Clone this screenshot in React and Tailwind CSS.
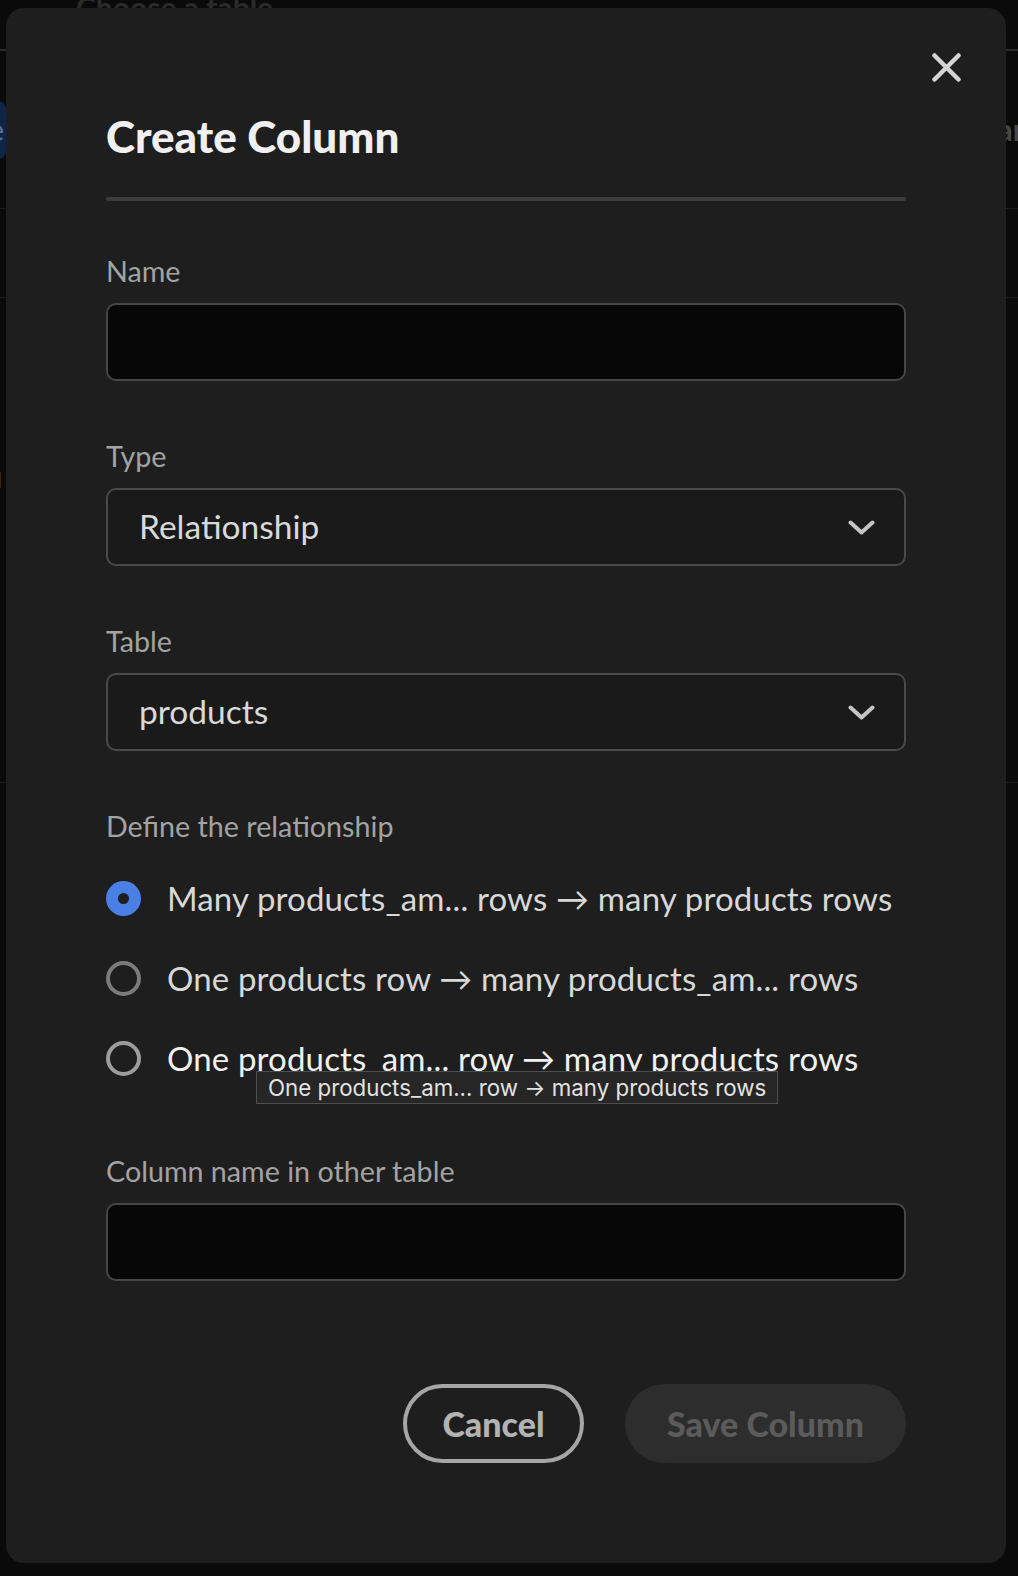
import { useState } from 'react';

const labelCls = 'text-[28.7px] leading-[34px] text-[#a3a3a3]';

const Chevron = () => (
  <svg width="27" height="15" viewBox="0 0 27 15" fill="none" className="shrink-0">
    <path d="M2.5 2.5 L13.5 12.5 L24.5 2.5" stroke="#c4c4c4" strokeWidth="4" strokeLinecap="round" strokeLinejoin="round" />
  </svg>
);

const Field = ({ label, className = '', children }) => (
  <div className={className}>
    <div className={labelCls}>{label}</div>
    <div className="mt-[15px]">{children}</div>
  </div>
);

const TextInput = () => (
  <input className="block h-[78px] w-full rounded-[10px] border-2 border-[#464646] bg-[#070707] px-[30px] text-[32px] text-[#dcdcdc] outline-none" />
);

const Select = ({ value }) => (
  <div className="flex h-[78px] w-full items-center justify-between rounded-[10px] border-2 border-[#4a4a4a] bg-[#1a1a1a] pl-[31px] pr-[29px]">
    <span className="text-[33.5px] leading-none text-[#d9d9d9]">{value}</span>
    <Chevron />
  </div>
);

const options = [
  'Many products_am... rows → many products rows',
  'One products row → many products_am... rows',
  'One products_am... row → many products rows',
];

const Radio = ({ label, checked, hover, onClick, children }) => (
  <div className="relative flex h-[80px] cursor-pointer items-center" onClick={onClick}>
    {checked ? (
      <span className="flex h-[35px] w-[35px] shrink-0 items-center justify-center rounded-full bg-[#4a80e6]">
        <span className="h-[11px] w-[11px] rounded-full bg-[#1e1e1e]" />
      </span>
    ) : (
      <span className={`h-[35px] w-[35px] shrink-0 rounded-full border-[4px] ${hover ? 'border-[#9c9c9c]' : 'border-[#7b7b7b]'}`} />
    )}
    <span className={`ml-[26px] text-[33px] leading-none tracking-[0.15px] whitespace-nowrap ${hover ? 'text-[#f0f0f0]' : 'text-[#d8d8d8]'}`}>
      {label}
    </span>
    {children}
  </div>
);

export default function App() {
  const [rel, setRel] = useState(0);

  return (
    <div className="relative h-[1576px] w-full overflow-hidden bg-[#0a0a0a] font-['Lato',sans-serif]">
      {/* page behind the dialog */}
      <div className="text-[#4a4a4a]">
        <div className="h-[51px] border-b-2 border-[#2c2c2c] pl-[76px] text-[30px] font-bold leading-[14px] text-[#2a2a2a]">
          Choose a table
        </div>
        <div className="flex h-[158px] items-center justify-between border-b border-[#1b1b1b]">
          <div className="flex h-[58px] w-[40px] -ml-[34px] items-center justify-end rounded-[8px] bg-[#0f2447] pr-[2px] text-[30px] text-[#5d6f90]">
            e
          </div>
          <div className="-mr-[6px] text-[30px] font-bold text-[#474747]">ar</div>
        </div>
        <div className="h-[89px] border-b border-[#1b1b1b]" />
        <div className="h-[485px] border-b border-[#1b1b1b] pt-[150px] text-[30px] text-[#3c3c3c]">
          <div className="-ml-[14px] leading-[56px]">u</div>
          <div className="-ml-[14px] leading-[56px]">s</div>
        </div>
      </div>

      {/* dialog */}
      <div className="absolute left-[6px] top-[8px] w-[1000px] rounded-[18px] bg-[#1e1e1e] px-[100px] pb-[100px] pt-[102px]">
        <button className="absolute right-[45px] top-[45px]" aria-label="Close">
          <svg width="29" height="29" viewBox="0 0 29 29" fill="none">
            <path d="M2.5 2.5 L26.5 26.5 M26.5 2.5 L2.5 26.5" stroke="#d4d4d4" strokeWidth="4.5" strokeLinecap="round" />
          </svg>
        </button>

        <h1 className="text-[44px] font-black leading-[53px] text-[#f0f0f0]">Create Column</h1>
        <div className="mt-[34px] h-[4px] rounded-full bg-[#3c3c3c]" />

        <Field label="Name" className="mt-[53px]">
          <TextInput />
        </Field>

        <Field label="Type" className="mt-[58px]">
          <Select value="Relationship" />
        </Field>

        <Field label="Table" className="mt-[58px]">
          <Select value="products" />
        </Field>

        <div className="mt-[58px]">
          <div className={labelCls}>Define the relationship</div>
          <div className="mt-[15px] flex flex-col">
            {options.map((o, i) => (
              <Radio key={o} label={o} checked={rel === i} hover={i === 2} onClick={() => setRel(i)}>
                {i === 2 && (
                  <div className="absolute left-[150px] top-[53px] whitespace-nowrap border border-[#4e4e4e] bg-[#262626] px-[11px] py-[3px] font-['Inter',sans-serif] text-[22.3px] leading-[25px] text-[#e2e2e2]">
                    One products_am... row → many products rows
                  </div>
                )}
              </Radio>
            ))}
          </div>
        </div>

        <Field label="Column name in other table" className="mt-[56px]">
          <TextInput />
        </Field>

        <div className="mt-[103px] flex justify-end gap-[41px]">
          <button className="h-[79px] w-[181px] rounded-full border-[4px] border-[#a6a6a6] text-[34px] font-black text-[#b3b3b3]">
            Cancel
          </button>
          <button className="h-[79px] w-[281px] rounded-full bg-[#2d2d2d] text-[34px] font-black text-[#5b5b5b]" disabled>
            Save Column
          </button>
        </div>
      </div>
    </div>
  );
}
